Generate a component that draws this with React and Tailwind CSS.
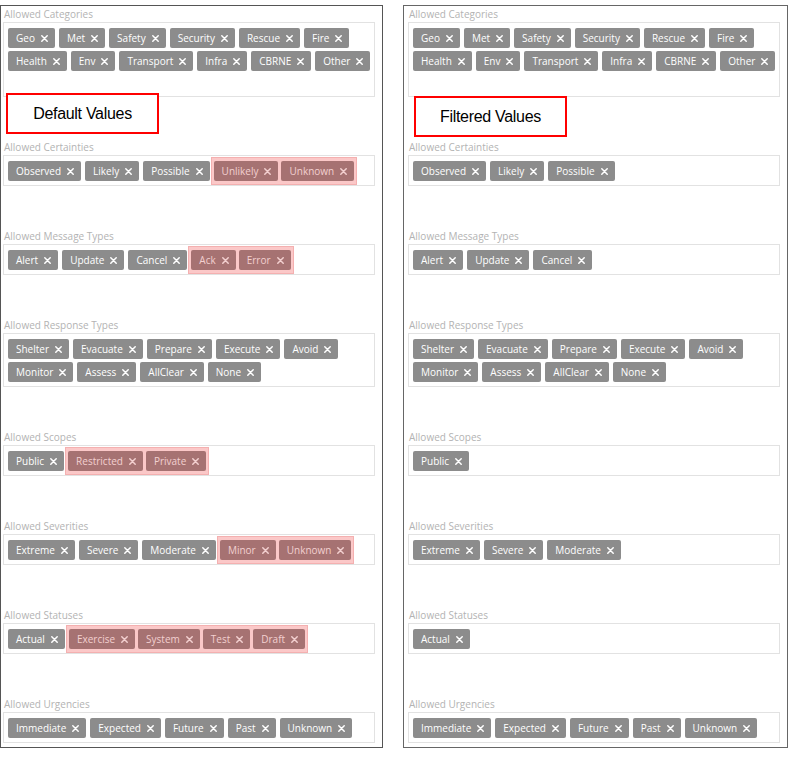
const sections = [
  { label: 'Allowed Categories', tall: true, items: ['Geo', 'Met', 'Safety', 'Security', 'Rescue', 'Fire', 'Health', 'Env', 'Transport', 'Infra', 'CBRNE', 'Other'], extra: [] },
  { label: 'Allowed Certainties', items: ['Observed', 'Likely', 'Possible'], extra: ['Unlikely', 'Unknown'] },
  { label: 'Allowed Message Types', items: ['Alert', 'Update', 'Cancel'], extra: ['Ack', 'Error'] },
  { label: 'Allowed Response Types', items: ['Shelter', 'Evacuate', 'Prepare', 'Execute', 'Avoid', 'Monitor', 'Assess', 'AllClear', 'None'], extra: [] },
  { label: 'Allowed Scopes', items: ['Public'], extra: ['Restricted', 'Private'] },
  { label: 'Allowed Severities', items: ['Extreme', 'Severe', 'Moderate'], extra: ['Minor', 'Unknown'] },
  { label: 'Allowed Statuses', items: ['Actual'], extra: ['Exercise', 'System', 'Test', 'Draft'] },
  { label: 'Allowed Urgencies', items: ['Immediate', 'Expected', 'Future', 'Past', 'Unknown'], extra: [] },
]

function XIcon() {
  return (
    <svg width="7" height="7" viewBox="0 0 7 7" className="shrink-0">
      <path d="M0.8 0.8L6.2 6.2M6.2 0.8L0.8 6.2" stroke="currentColor" strokeWidth="1.5" strokeLinecap="round" />
    </svg>
  )
}

function Chip({ text, muted }) {
  return (
    <span
      className={`h-[20px] flex items-center gap-[6px] pl-[8px] pr-[7px] rounded-[2px] text-[10px] leading-none ${
        muted ? 'bg-[#a67272] text-[#f3d0d0]' : 'bg-[#8c8c8c] text-white'
      }`}
    >
      {text}
      <XIcon />
    </span>
  )
}

function Field({ section, filtered }) {
  return (
    <div>
      <div className="h-[14px] leading-[13px] text-[10px] text-[#b3b3b3] pl-[1px]">{section.label}</div>
      <div
        className={`border border-[#e2e2e2] pt-[5px] pb-[4px] pl-[4px] pr-[1px] flex flex-wrap content-start gap-x-[4px] gap-y-[3px] ${
          section.tall ? 'h-[75px]' : ''
        }`}
      >
        {section.items.map((t) => (
          <Chip key={t} text={t} />
        ))}
        {!filtered && section.extra.length > 0 && (
          <span className="flex gap-[3px] -mx-[2px] px-[2px] -my-[3px] py-[3px] bg-[#fbc8c8] outline outline-1 outline-[#f4b0b0]">
            {section.extra.map((t) => (
              <Chip key={t} text={t} muted />
            ))}
          </span>
        )}
      </div>
    </div>
  )
}

function Panel({ filtered, title, className, boxClass }) {
  return (
    <div className={`relative border border-[#555] pt-[2px] pb-[4px] flex flex-col gap-[44px] ${className}`}>
      {sections.map((s) => (
        <Field key={s.label} section={s} filtered={filtered} />
      ))}
      <div
        className={`absolute h-[41px] w-[153px] border-[2px] border-[#ff0000] bg-white flex items-center justify-center text-[16px] text-black tracking-[-0.3px] ${boxClass}`}
        style={{ fontFamily: '"Liberation Sans", Arial, sans-serif' }}
      >
        {title}
      </div>
    </div>
  )
}

export default function App() {
  return (
    <div className="w-[799px] h-[757px] bg-white pt-[5px]" style={{ fontFamily: '"Open Sans", "Noto Sans", sans-serif' }}>
      <div className="flex gap-[20px] items-start">
        <Panel title="Default Values" className="w-[383px] pl-[2px] pr-[7px]" boxClass="left-[5px] top-[87px]" />
        <Panel filtered title="Filtered Values" className="w-[385px] pl-[4px] pr-[7px] border-[#666]" boxClass="left-[10px] top-[90px]" />
      </div>
    </div>
  )
}
